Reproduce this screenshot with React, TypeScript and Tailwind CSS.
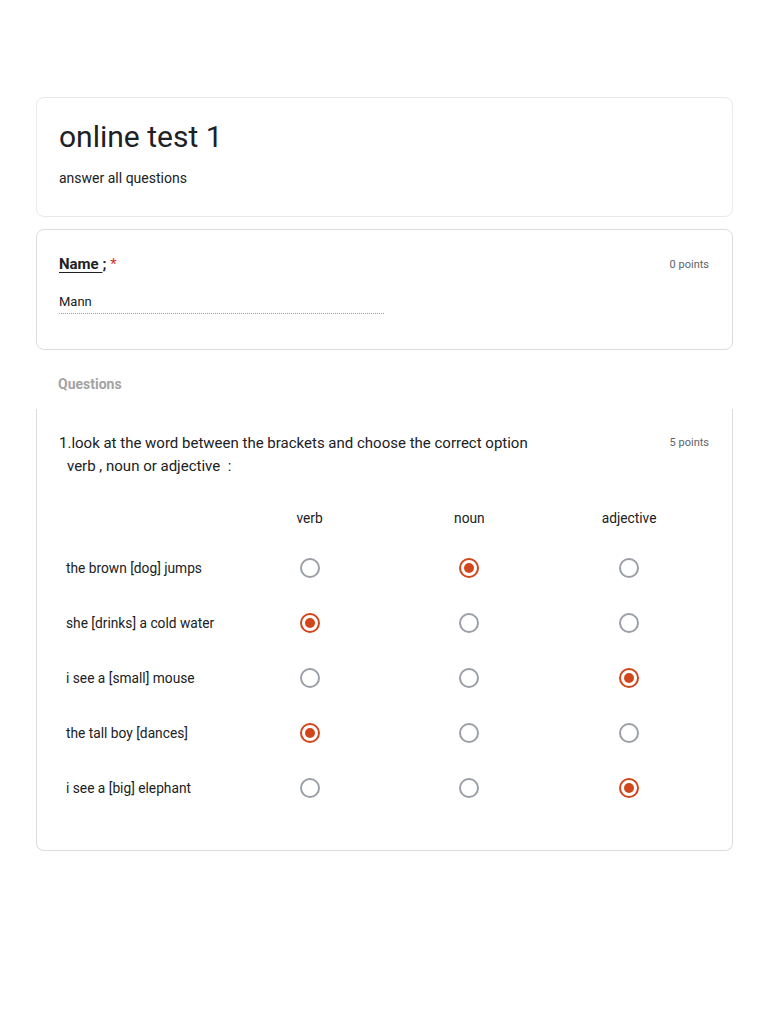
import React from "react";

const rows: { label: string; sel: number }[] = [
  { label: "the brown [dog] jumps", sel: 1 },
  { label: "she [drinks] a cold water", sel: 0 },
  { label: "i see a [small] mouse", sel: 2 },
  { label: "the tall boy [dances]", sel: 0 },
  { label: "i see a [big] elephant", sel: 2 },
];

function Radio({ on }: { on: boolean }) {
  return on ? (
    <div className="w-5 h-5 rounded-full border-2 border-[#d2461c] flex items-center justify-center">
      <div className="w-[10px] h-[10px] rounded-full bg-[#d2461c]" />
    </div>
  ) : (
    <div className="w-5 h-5 rounded-full border-2 border-[#9aa0a6]" />
  );
}

export default function App() {
  return (
    <div
      className="w-[768px] min-h-[1024px] bg-white text-[#202124]"
      style={{ fontFamily: "Roboto, 'Liberation Sans', sans-serif" }}
    >
      <div className="pt-[97px] pl-[36px] w-[733px] flex flex-col">
        <div className="border border-[#e8e9ec] rounded-lg h-[120px] pl-[22px] pt-[20px]">
          <div className="text-[30px] leading-[38px]">online test 1</div>
          <div className="text-[14px] leading-[20px] mt-[12px] text-[#202124]">answer all questions</div>
        </div>

        <div className="mt-[12px] border border-[#dadce0] rounded-lg h-[121px] pl-[22px] pr-[23px] pt-[23px]">
          <div className="flex justify-between items-center">
            <div className="text-[15px] leading-[22px] font-bold">
              <span className="underline underline-offset-[3px]">Name </span>;{" "}
              <span className="text-[#d93025] font-normal">*</span>
            </div>
            <div className="text-[11px] text-[#5f6368] pt-[2px]">0 points</div>
          </div>
          <div className="mt-[18px] w-[325px] border-b border-dotted border-[#9aa0a6] pb-[2px] text-[13px] leading-[18px]">
            Mann
          </div>
        </div>

        <div className="pl-[22px] mt-[24px] text-[14px] leading-[20px] font-bold text-[#a3a3a3]">Questions</div>

        <div className="mt-[15px] border border-t-0 border-[#dadce0] rounded-b-lg h-[442px] pl-[22px] pr-[23px] pt-[23px]">
          <div className="flex justify-between">
            <div className="text-[15px] leading-[23px]">
              <div>1.look at the word between the brackets and choose the correct option</div>
              <div className="pl-[8px]">verb , noun or adjective&nbsp; :</div>
            </div>
            <div className="text-[11px] text-[#5f6368] pt-[3px]">5 points</div>
          </div>

          <div className="mt-[25px] flex items-center h-[30px] text-[13.75px]">
            <div className="w-[171px]" />
            <div className="w-[160px] text-center">verb</div>
            <div className="w-[160px] text-center">noun</div>
            <div className="w-[160px] text-center">adjective</div>
          </div>
          <div className="mt-[20px] flex flex-col gap-[25px]">
            {rows.map((r) => (
              <div key={r.label} className="flex items-center h-[30px] text-[13.75px]">
                <div className="w-[171px] pl-[7px]">{r.label}</div>
                {[0, 1, 2].map((c) => (
                  <div key={c} className="w-[160px] flex justify-center">
                    <Radio on={r.sel === c} />
                  </div>
                ))}
              </div>
            ))}
          </div>
        </div>
      </div>
    </div>
  );
}
